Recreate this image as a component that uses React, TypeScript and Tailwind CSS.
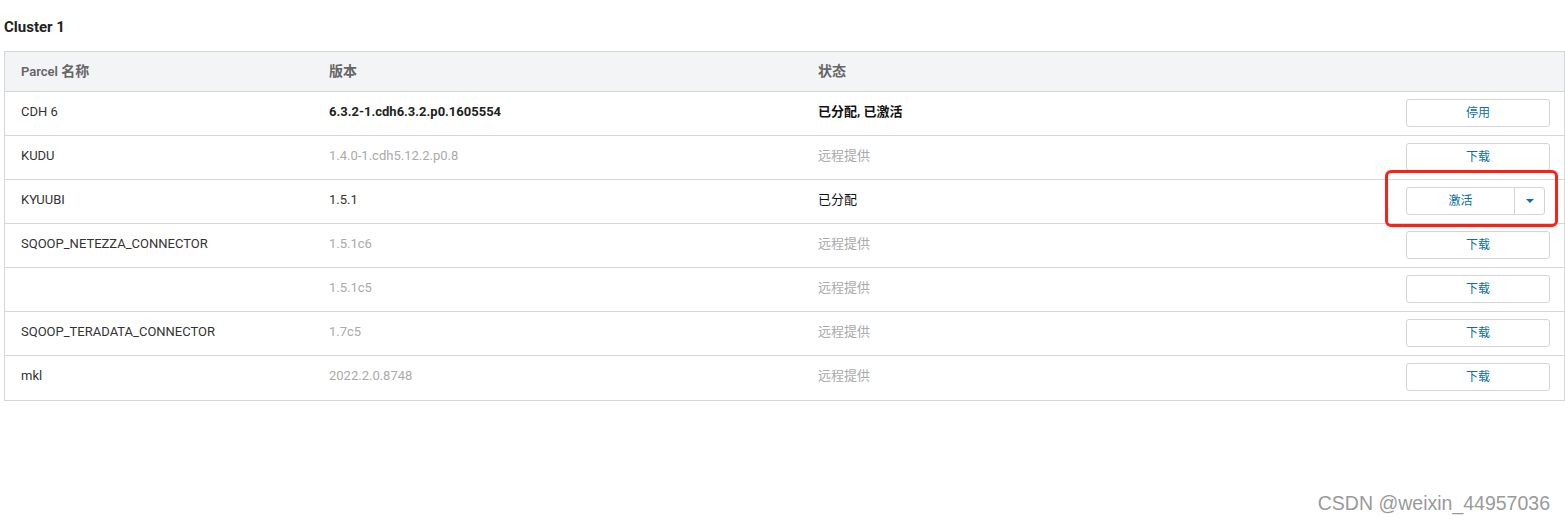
import { useState } from 'react';

type Row = {
  name: string;
  version: string;
  status: string;
  remote?: boolean;
  strong?: boolean;
  action: string;
  split?: boolean;
};

const rows: Row[] = [
  { name: 'CDH 6', version: '6.3.2-1.cdh6.3.2.p0.1605554', status: '已分配, 已激活', strong: true, action: '停用' },
  { name: 'KUDU', version: '1.4.0-1.cdh5.12.2.p0.8', status: '远程提供', remote: true, action: '下载' },
  { name: 'KYUUBI', version: '1.5.1', status: '已分配', action: '激活', split: true },
  { name: 'SQOOP_NETEZZA_CONNECTOR', version: '1.5.1c6', status: '远程提供', remote: true, action: '下载' },
  { name: '', version: '1.5.1c5', status: '远程提供', remote: true, action: '下载' },
  { name: 'SQOOP_TERADATA_CONNECTOR', version: '1.7c5', status: '远程提供', remote: true, action: '下载' },
  { name: 'mkl', version: '2022.2.0.8748', status: '远程提供', remote: true, action: '下载' },
];

const font = "font-['Roboto','Noto_Sans_CJK_SC',sans-serif]";

const ActionButton = ({ row }: { row: Row }) => {
  if (row.split) {
    return (
      <div className="relative">
        <div className="flex h-[28px] w-[139px] rounded-[3px] border border-[#d4d4d4] bg-white text-[12px] text-[#0b6fa6]">
          <button className="flex-1 border-r border-[#d4d4d4]">{row.action}</button>
          <button className="flex w-[29px] items-center justify-center">
            <span className="h-0 w-0 border-x-[4px] border-t-[4px] border-x-transparent border-t-[#0b6fa6]" />
          </button>
        </div>
        <div className="pointer-events-none absolute -top-[17px] -bottom-[12px] -left-[21px] -right-[8px] rounded-[6px] border-[3px] border-[#ff2015]" />
      </div>
    );
  }
  return (
    <button className="h-[28px] w-[144px] rounded-[3px] border border-[#d4d4d4] bg-white text-[12px] text-[#0b6fa6]">
      {row.action}
    </button>
  );
};

export default function App() {
  const [data] = useState(rows);
  return (
    <div className={`relative h-[525px] w-[1565px] bg-white ${font}`}>
      <div className="px-[4px] pt-[17px]">
        <h2 className="h-[34px] text-[15px] font-bold leading-[20px] text-[#222]">Cluster 1</h2>
        <div className="w-[1561px] border border-[#d6d6d6]">
          <div className="grid h-[40px] grid-cols-[308px_489px_1fr_auto] items-center border-b border-[#d6d6d6] bg-[#f3f4f6] text-[13px] font-semibold text-[#666]">
            <div className="pl-[16px]">
              Parcel <span className="text-[14px]">名称</span>
            </div>
            <div className="pl-[16px] text-[14px]">版本</div>
            <div className="pl-[16px] text-[14px]">状态</div>
            <div />
          </div>
          {data.map((r, i) => (
            <div
              key={i}
              className={`grid h-[44px] grid-cols-[308px_489px_1fr_auto] items-center pb-[2px] text-[13px] ${
                i < data.length - 1 ? 'border-b border-[#d6d6d6]' : ''
              }`}
            >
              <div className="pb-[2px] pl-[16px] text-[#333]">{r.name}</div>
              <div
                className={`pb-[2px] pl-[16px] ${
                  r.strong ? 'font-bold text-[#222]' : r.remote ? 'text-[#aaa]' : 'text-[#333]'
                }`}
              >
                {r.version}
              </div>
              <div
                className={`pb-[2px] pl-[16px] ${
                  r.strong ? 'font-bold text-[#111]' : r.remote ? 'text-[#aaa]' : 'text-[#111]'
                }`}
              >
                {r.status}
              </div>
              <div className="flex justify-end pr-[14px]">
                <div className="w-[144px]">
                  <ActionButton row={r} />
                </div>
              </div>
            </div>
          ))}
        </div>
      </div>
      <div className="absolute right-[15px] bottom-[7px] font-['Liberation_Sans',sans-serif] text-[19.5px] text-[#9a9a9a]">
        CSDN @weixin_44957036
      </div>
    </div>
  );
}
